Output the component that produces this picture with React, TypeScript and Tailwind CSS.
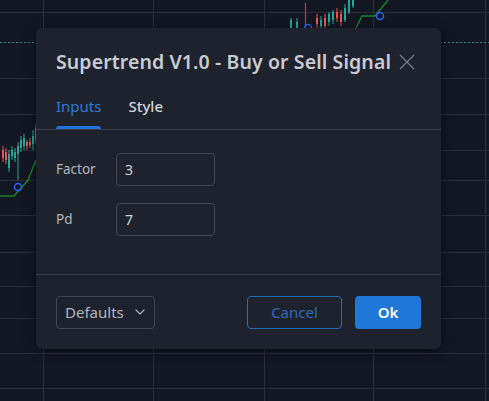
import React from 'react';
import { ChevronDown } from 'lucide-react';

const hLines = [12, 78, 114, 150, 180, 215, 252, 286, 318, 353, 388];
const vLines = [43, 153, 264, 373, 485];

// candles: x, open, close, high, low, up
const candles: [number, number, number, number, number, boolean][] = [
  [2, 150, 158, 146, 162, false],
  [5, 152, 160, 148, 164, false],
  [8, 154, 168, 150, 172, true],
  [11, 150, 156, 146, 160, true],
  [14, 152, 158, 148, 162, true],
  [17, 146, 154, 142, 180, true],
  [20, 140, 148, 136, 152, true],
  [23, 138, 146, 134, 150, true],
  [26, 142, 146, 140, 150, false],
  [29, 142, 145, 138, 148, false],
  [32, 136, 144, 130, 150, true],
  [35, 128, 140, 124, 144, true],
  [290, 20, 28, 18, 30, true],
  [296, 22, 28, 18, 30, true],
  [316, 18, 24, 14, 28, false],
  [320, 20, 26, 16, 28, true],
  [324, 18, 26, 14, 28, false],
  [328, 14, 22, 12, 26, true],
  [332, 12, 20, 10, 24, true],
  [336, 12, 18, 8, 22, false],
  [340, 14, 22, 10, 26, false],
  [344, 8, 20, 4, 22, true],
  [348, 0, 12, -4, 14, true],
  [352, -4, 6, -8, 8, true],
];

function Chart() {
  return (
    <svg className="absolute inset-0" width="489" height="401" viewBox="0 0 489 401">
      {hLines.map((y) => (
        <line key={'h' + y} x1="0" x2="489" y1={y + 0.5} y2={y + 0.5} stroke="#2a2e39" strokeWidth="1" />
      ))}
      {vLines.map((x) => (
        <line key={'v' + x} x1={x + 0.5} x2={x + 0.5} y1="0" y2="401" stroke="#2a2e39" strokeWidth="1" />
      ))}
      <line x1="0" x2="489" y1="42.5" y2="42.5" stroke="#22ab94" strokeWidth="1" strokeDasharray="2 2" opacity="0.8" />
      {candles.map(([x, o, c, h, l, up], i) => (
        <g key={i}>
          <line x1={x + 1} x2={x + 1} y1={h} y2={l} stroke={up ? '#26a69a' : '#ef5350'} strokeWidth="1" />
          <rect x={x} y={Math.min(o, c)} width="2" height={Math.abs(c - o)} fill={up ? '#26a69a' : '#ef5350'} />
        </g>
      ))}
      <line x1="305.5" x2="305.5" y1="3" y2="28" stroke="#e0303a" strokeWidth="1.2" />
      <polyline points="0,196 14,196 22,187 28,180 36,160" fill="none" stroke="#1b7f2c" strokeWidth="1.5" />
      <polyline points="356,28 362,16 375,16 388,0" fill="none" stroke="#1b7f2c" strokeWidth="1.5" />
      <circle cx="18" cy="187" r="3.5" fill="none" stroke="#2962ff" strokeWidth="1.5" />
      <circle cx="380" cy="16" r="3.5" fill="none" stroke="#2962ff" strokeWidth="1.5" />
      <circle cx="308" cy="28" r="3.5" fill="none" stroke="#2962ff" strokeWidth="1.5" />
    </svg>
  );
}

export default function App() {
  return (
    <div className="relative h-[401px] w-full overflow-hidden bg-[#131722]" style={{ fontFamily: '"Noto Sans", "Open Sans", sans-serif' }}>
      <Chart />

      {/* Settings dialog */}
      <div className="absolute left-[36px] top-[28px] flex h-[321px] w-[405px] flex-col rounded-md bg-[#1e222d] shadow-[0_2px_12px_rgba(0,0,0,0.5)]">
        <div className="flex h-[68px] items-center justify-between pl-[20px] pr-[26px]">
          <h2 className="text-[19.5px] font-semibold tracking-[0.1px] text-[#c8cbd2]">Supertrend V1.0 - Buy or Sell Signal</h2>
          <svg width="16" height="16" viewBox="0 0 16 16" className="text-[#787b86]">
            <path d="M1 1 L15 15 M15 1 L1 15" stroke="currentColor" strokeWidth="1.3" fill="none" />
          </svg>
        </div>

        <div className="flex gap-[27px] border-b border-[#3a3e4a] px-[20px]">
          <div className="flex flex-col">
            <span className="pb-[10px] text-[15px] leading-[20px] text-[#2f7ad6]">Inputs</span>
            <div className="h-[3px] rounded-t-sm bg-[#2173d9]" />
          </div>
          <span className="text-[15px] font-medium leading-[20px] text-[#d1d4dc]">Style</span>
        </div>

        <div className="flex flex-1 flex-col gap-[17px] border-b border-[#3a3e4a] px-[20px] pt-[23px]">
          <div className="flex items-center">
            <span className="w-[60px] text-[13.5px] text-[#b2b5be]">Factor</span>
            <div className="flex h-[33px] w-[99px] items-center rounded border border-[#434651] px-[8px] text-[14px] text-[#d1d4dc]">3</div>
          </div>
          <div className="flex items-center">
            <span className="w-[60px] text-[13.5px] text-[#b2b5be]">Pd</span>
            <div className="flex h-[33px] w-[99px] items-center rounded border border-[#434651] px-[8px] text-[14px] text-[#d1d4dc]">7</div>
          </div>
        </div>

        <div className="flex h-[74px] items-center px-[20px]">
          <div className="flex h-[33px] w-[99px] items-center justify-between rounded border border-[#434651] pl-[8px] pr-[6px] text-[15px] text-[#b2b5be]">
            <span>Defaults</span>
            <ChevronDown className="h-[16px] w-[16px]" strokeWidth={1.6} />
          </div>
          <div className="ml-auto flex gap-[13px]">
            <button className="h-[33px] w-[95px] rounded border border-[#2a6bbd] text-[15px] text-[#2d6cba]">Cancel</button>
            <button className="h-[33px] w-[66px] rounded bg-[#1f77d7] text-[15px] font-semibold text-white">Ok</button>
          </div>
        </div>
      </div>
    </div>
  );
}
